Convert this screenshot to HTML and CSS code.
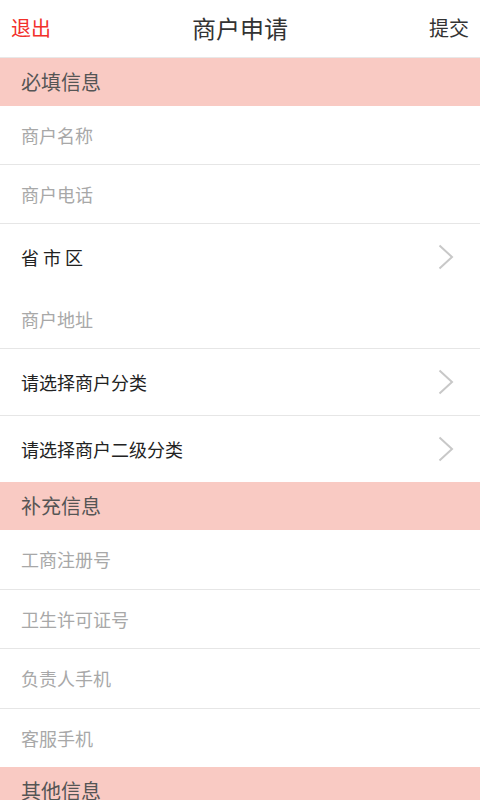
FILE: index.html
```html
<!DOCTYPE html>
<html lang="zh-CN">
<head>
  <meta charset="UTF-8" />
  <title>商户申请</title>
  <link rel="stylesheet" href="styles.css">
</head>
<body>

<div class="topbar">
  <span class="quit">退出</span>
  <span class="title">商户申请</span>
  <span class="submit">提交</span>
</div>

<div class="section">必填信息</div>
<div class="row"><input type="text" placeholder="商户名称" /></div>
<div class="row"><input type="text" placeholder="商户电话" /></div>
<div class="row pick tall noline">
  <span class="label">省 市 区</span>
  <svg class="arrow" width="16" height="26" viewBox="0 0 16 26"><polyline points="1.5,1.5 14,13 1.5,24.5" /></svg>
</div>
<div class="row"><input type="text" placeholder="商户地址" /></div>
<div class="row pick tall">
  <span class="label">请选择商户分类</span>
  <svg class="arrow" width="16" height="26" viewBox="0 0 16 26"><polyline points="1.5,1.5 14,13 1.5,24.5" /></svg>
</div>
<div class="row pick tall noline">
  <span class="label">请选择商户二级分类</span>
  <svg class="arrow" width="16" height="26" viewBox="0 0 16 26"><polyline points="1.5,1.5 14,13 1.5,24.5" /></svg>
</div>

<div class="section">补充信息</div>
<div class="extra">
  <div class="row"><input type="text" placeholder="工商注册号" /></div>
  <div class="row"><input type="text" placeholder="卫生许可证号" /></div>
  <div class="row"><input type="text" placeholder="负责人手机" /></div>
  <div class="row noline"><input type="text" placeholder="客服手机" /></div>
</div>

<div class="section">其他信息</div>

</body>
</html>
```

FILE: styles.css
```css
body {
  margin: 0;
  font-family: "Noto Sans CJK SC", "Noto Sans", sans-serif;
  background: #fff;
  color: #222;
}
.topbar {
  height: 54px;
  padding: 0 11px 3px 11px;
  border-bottom: 1px solid #e8e8e8;
  display: flex;
  align-items: center;
  justify-content: space-between;
}
.quit {
  color: #f2302a;
  font-size: 20px;
}
.title {
  font-size: 24px;
  color: #333;
}
.submit {
  font-size: 20px;
  color: #333;
}
.section {
  background: #f9cac3;
  height: 48px;
  line-height: 48px;
  padding-left: 21px;
  font-size: 20px;
  color: #555;
}
.row {
  height: 58px;
  border-bottom: 1px solid #e6e6e6;
  display: flex;
  align-items: center;
  padding: 0 26px 0 21px;
}
.row.tall {
  height: 66px;
}
.row.noline {
  border-bottom: none;
}
.extra .row {
  height: 58.5px;
}
.row input {
  border: none;
  outline: none;
  padding: 0;
  width: 100%;
  font-family: inherit;
  font-size: 18px;
  color: #222;
  background: transparent;
}
.row input::placeholder {
  color: #a8a8a8;
}
.pick {
  justify-content: space-between;
}
.label {
  font-size: 18px;
  color: #222;
}
.arrow polyline {
  fill: none;
  stroke: #c8c8c8;
  stroke-width: 2;
}
```
